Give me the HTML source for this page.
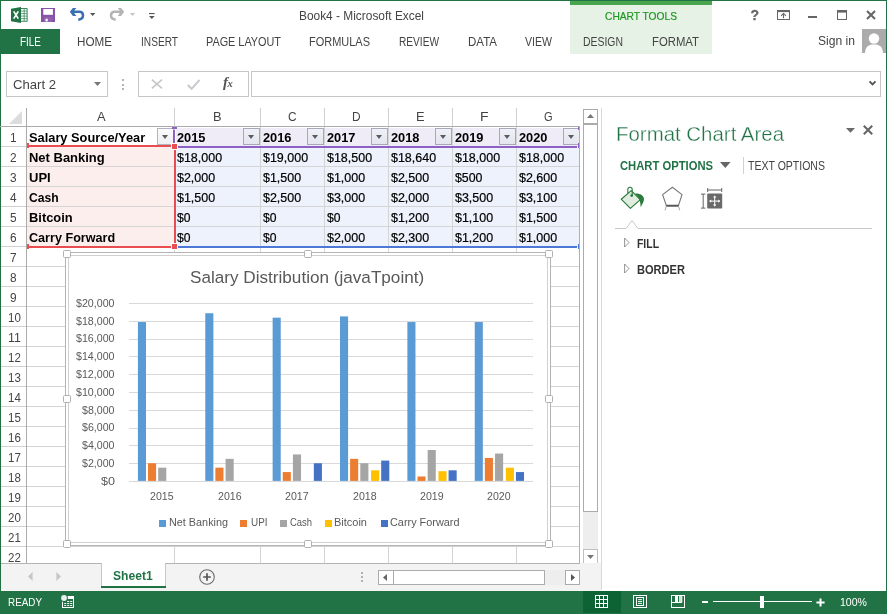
<!DOCTYPE html>
<html><head><meta charset="utf-8"><title>Book4 - Microsoft Excel</title>
<style>
html,body{margin:0;padding:0;background:#fff;}
body{width:887px;height:614px;overflow:hidden;font-family:"Liberation Sans",sans-serif;}
#app{will-change:transform;position:relative;width:887px;height:614px;overflow:hidden;background:#fff;}
.a{position:absolute;}
.t{position:absolute;white-space:nowrap;line-height:20px;height:20px;transform-origin:0 50%;font-family:"Liberation Sans",sans-serif;}
svg{position:absolute;overflow:visible;}
.hl{position:absolute;height:1px;background:#d4d4d4;}
.vl{position:absolute;width:1px;background:#d4d4d4;}
.fb{position:absolute;width:17px;height:17px;border:1px solid #a6a9b8;background:linear-gradient(#f0f0f7,#e4e4ee);box-sizing:border-box;}
.fb:after{content:"";position:absolute;left:3.7px;top:6px;border-left:3.7px solid transparent;border-right:3.7px solid transparent;border-top:4.2px solid #5a5a60;}
.hd{position:absolute;width:6px;height:6px;border:1px solid #b0b0b0;border-radius:1.5px;background:#fff;}

</style></head>
<body>
<div id="app">
<div class="a" style="left:570px;top:0px;width:142px;height:54px;background:#e6f2e6;"></div>
<div class="a" style="left:570px;top:0px;width:142px;height:5px;background:#4aa550;"></div>
<div class="a" style="left:0px;top:0px;width:887px;height:1px;background:#217346;"></div>
<div class="a" style="left:0px;top:0px;width:1px;height:614px;background:#217346;"></div>
<div class="a" style="left:886px;top:0px;width:1px;height:614px;background:#217346;"></div>
<div class="a" style="left:1px;top:29px;width:59px;height:25px;background:#217346;"></div>
<div class="a" style="left:862px;top:29px;width:24px;height:24px;background:#ababab;"></div>
<svg style="left:862px;top:29px" width="24" height="25" viewBox="0 0 24 25"><circle cx="12" cy="9.5" r="5.2" fill="#fff"/><path d="M3 25 C3 17 7 15.5 12 15.5 C17 15.5 21 17 21 25 Z" fill="#fff"/></svg>
<svg style="left:11px;top:7px" width="17" height="16" viewBox="0 0 17 16"><rect x="8.5" y="1.6" width="7.6" height="12.6" fill="#fff" stroke="#217346" stroke-width="0.9"/><path d="M10 4.1H16M10 6.6H16M10 9.1H16M10 11.6H16" stroke="#3d8a5e" stroke-width="0.8"/><path d="M13.2 2V14" stroke="#3d8a5e" stroke-width="0.8"/><path d="M0 1.7 L10 0 V16 L0 14.3 Z" fill="#217346"/><path d="M2.7 4.4 L7.3 11.6 M7.3 4.4 L2.7 11.6" stroke="#fff" stroke-width="1.7"/></svg>
<svg style="left:41px;top:8px" width="14" height="14" viewBox="0 0 14 14"><rect x="0" y="0" width="14" height="14" fill="#8653a6"/><rect x="2.3" y="1" width="9.6" height="5.8" fill="#fff"/><rect x="2.8" y="8.8" width="8.6" height="5.2" fill="#9061ae"/><rect x="4.5" y="10.8" width="2.2" height="2.6" fill="#fff"/></svg>
<svg style="left:69px;top:7px" width="17" height="15" viewBox="0 0 17 15"><path d="M4 4.8 H10.3 C13.2 4.8 14 6.9 14 8.5 C14 10.9 12.1 12.3 9.3 12.7" fill="none" stroke="#3a70b2" stroke-width="2.5"/><path d="M0.8 4.8 L3.9 0.9 H7.3 L4.4 4.8 L7.3 8.9 H3.9 Z" fill="#3a70b2"/></svg>
<svg style="left:90px;top:13px" width="6" height="4"><path d="M0 0 H5.4 L2.7 3 Z" fill="#555"/></svg>
<svg style="left:108.5px;top:7px" width="17" height="15" viewBox="0 0 17 15"><g transform="translate(16,0) scale(-1,1)"><path d="M4 4.8 H10.3 C13.2 4.8 14 6.9 14 8.5 C14 10.9 12.1 12.3 9.3 12.7" fill="none" stroke="#b4b4b4" stroke-width="2.5"/><path d="M0.8 4.8 L3.9 0.9 H7.3 L4.4 4.8 L7.3 8.9 H3.9 Z" fill="#b4b4b4"/></g></svg>
<svg style="left:130px;top:13px" width="6" height="4"><path d="M0 0 H5 L2.5 3 Z" fill="#c4c4c4"/></svg>
<svg style="left:149px;top:12px" width="6" height="8"><rect x="0" y="1" width="5.6" height="1.1" fill="#555"/><path d="M0 4 H5.6 L2.8 7 Z" fill="#555"/></svg>
<span class="a" style="left:750.5px;top:5px;-webkit-text-stroke:0.3px #666;font:700 14px 'Liberation Sans',sans-serif;color:#666;line-height:20px;">?</span>
<svg style="left:777px;top:10px" width="13" height="10" viewBox="0 0 13 10"><rect x="0.5" y="0.5" width="12" height="9" fill="none" stroke="#666" stroke-width="1"/><rect x="0.5" y="0.5" width="12" height="1.6" fill="#666"/><path d="M6.5 8.2 V4 M4 5.8 L6.5 3.4 L9 5.8" fill="none" stroke="#666" stroke-width="1.1"/></svg>
<div class="a" style="left:808px;top:16px;width:9px;height:2px;background:#666"></div>
<svg style="left:837px;top:10px" width="10" height="10" viewBox="0 0 10 10"><rect x="0.5" y="0.5" width="9" height="9" fill="none" stroke="#666" stroke-width="1"/><rect x="0" y="0" width="10" height="2.6" fill="#666"/></svg>
<svg style="left:866px;top:10px" width="10" height="10" viewBox="0 0 10 10"><path d="M1 1 L9 9 M9 1 L1 9" stroke="#666" stroke-width="2.1"/></svg>
<div class="a" style="left:6px;top:71px;width:102px;height:26px;box-sizing:border-box;border:1px solid #c6c6c6;background:#fff;"></div>
<svg style="left:94px;top:82px" width="8" height="5"><path d="M0 0 H7 L3.5 4 Z" fill="#777"/></svg>
<div class="a" style="left:122px;top:79px;width:2px;height:2px;background:#b4b4b4;"></div>
<div class="a" style="left:122px;top:83.5px;width:2px;height:2px;background:#b4b4b4;"></div>
<div class="a" style="left:122px;top:88px;width:2px;height:2px;background:#b4b4b4;"></div>
<div class="a" style="left:138px;top:71px;width:111px;height:26px;box-sizing:border-box;border:1px solid #c6c6c6;background:#fff;"></div>
<div class="a" style="left:251px;top:71px;width:630px;height:26px;box-sizing:border-box;border:1px solid #c6c6c6;background:#fff;"></div>
<svg style="left:151px;top:79px" width="12" height="10"><path d="M0.8 0.6 L11 9.4 M11 0.6 L0.8 9.4" stroke="#c4c4c8" stroke-width="1.4" fill="none"/></svg>
<svg style="left:187px;top:79px" width="14" height="11"><path d="M0.8 6 L4.6 9.8 L12.6 0.8" stroke="#c8c8ce" stroke-width="2" fill="none"/></svg>
<span class="a" style="left:223px;top:72.3px;font:italic 700 15px 'Liberation Serif',serif;color:#555;line-height:20px;letter-spacing:-0.5px">f<span style="font-size:10.5px;">x</span></span>
<svg style="left:869px;top:80px" width="7" height="6"><path d="M0.5 1.4 L3.5 4.4 L6.5 1.4" stroke="#555" stroke-width="1.9" fill="none"/></svg>
<div class="a" style="left:27px;top:147px;width:147px;height:100px;background:#fdeeee;"></div>
<div class="a" style="left:176px;top:128px;width:403px;height:19px;background:#f0ecf7;"></div>
<div class="a" style="left:176px;top:148px;width:403px;height:98px;background:#eef2fc;"></div>
<svg style="left:9px;top:111px" width="14" height="14"><path d="M13 0 V13 H0 Z" fill="#dcdcdc"/></svg>
<div class="a" style="left:174px;top:108px;width:1px;height:19px;background:#d0d0d0;"></div>
<div class="a" style="left:260px;top:108px;width:1px;height:19px;background:#d0d0d0;"></div>
<div class="a" style="left:324px;top:108px;width:1px;height:19px;background:#d0d0d0;"></div>
<div class="a" style="left:388px;top:108px;width:1px;height:19px;background:#d0d0d0;"></div>
<div class="a" style="left:452px;top:108px;width:1px;height:19px;background:#d0d0d0;"></div>
<div class="a" style="left:516px;top:108px;width:1px;height:19px;background:#d0d0d0;"></div>
<div class="a" style="left:0px;top:126px;width:580px;height:1px;background:#ababab;"></div>
<div class="a" style="left:26px;top:108px;width:1px;height:455px;background:#ababab;"></div>
<div class="a" style="left:1px;top:146px;width:25px;height:1px;background:#d0d0d0;"></div>
<div class="a" style="left:27px;top:146px;width:552px;height:1px;background:#d4d4d4;"></div>
<div class="a" style="left:1px;top:166px;width:25px;height:1px;background:#d0d0d0;"></div>
<div class="a" style="left:27px;top:166px;width:552px;height:1px;background:#d4d4d4;"></div>
<div class="a" style="left:1px;top:186px;width:25px;height:1px;background:#d0d0d0;"></div>
<div class="a" style="left:27px;top:186px;width:552px;height:1px;background:#d4d4d4;"></div>
<div class="a" style="left:1px;top:206px;width:25px;height:1px;background:#d0d0d0;"></div>
<div class="a" style="left:27px;top:206px;width:552px;height:1px;background:#d4d4d4;"></div>
<div class="a" style="left:1px;top:226px;width:25px;height:1px;background:#d0d0d0;"></div>
<div class="a" style="left:27px;top:226px;width:552px;height:1px;background:#d4d4d4;"></div>
<div class="a" style="left:1px;top:246px;width:25px;height:1px;background:#d0d0d0;"></div>
<div class="a" style="left:27px;top:246px;width:552px;height:1px;background:#d4d4d4;"></div>
<div class="a" style="left:1px;top:266px;width:25px;height:1px;background:#d0d0d0;"></div>
<div class="a" style="left:27px;top:266px;width:552px;height:1px;background:#d4d4d4;"></div>
<div class="a" style="left:1px;top:286px;width:25px;height:1px;background:#d0d0d0;"></div>
<div class="a" style="left:27px;top:286px;width:552px;height:1px;background:#d4d4d4;"></div>
<div class="a" style="left:1px;top:306px;width:25px;height:1px;background:#d0d0d0;"></div>
<div class="a" style="left:27px;top:306px;width:552px;height:1px;background:#d4d4d4;"></div>
<div class="a" style="left:1px;top:326px;width:25px;height:1px;background:#d0d0d0;"></div>
<div class="a" style="left:27px;top:326px;width:552px;height:1px;background:#d4d4d4;"></div>
<div class="a" style="left:1px;top:346px;width:25px;height:1px;background:#d0d0d0;"></div>
<div class="a" style="left:27px;top:346px;width:552px;height:1px;background:#d4d4d4;"></div>
<div class="a" style="left:1px;top:366px;width:25px;height:1px;background:#d0d0d0;"></div>
<div class="a" style="left:27px;top:366px;width:552px;height:1px;background:#d4d4d4;"></div>
<div class="a" style="left:1px;top:386px;width:25px;height:1px;background:#d0d0d0;"></div>
<div class="a" style="left:27px;top:386px;width:552px;height:1px;background:#d4d4d4;"></div>
<div class="a" style="left:1px;top:406px;width:25px;height:1px;background:#d0d0d0;"></div>
<div class="a" style="left:27px;top:406px;width:552px;height:1px;background:#d4d4d4;"></div>
<div class="a" style="left:1px;top:426px;width:25px;height:1px;background:#d0d0d0;"></div>
<div class="a" style="left:27px;top:426px;width:552px;height:1px;background:#d4d4d4;"></div>
<div class="a" style="left:1px;top:446px;width:25px;height:1px;background:#d0d0d0;"></div>
<div class="a" style="left:27px;top:446px;width:552px;height:1px;background:#d4d4d4;"></div>
<div class="a" style="left:1px;top:466px;width:25px;height:1px;background:#d0d0d0;"></div>
<div class="a" style="left:27px;top:466px;width:552px;height:1px;background:#d4d4d4;"></div>
<div class="a" style="left:1px;top:486px;width:25px;height:1px;background:#d0d0d0;"></div>
<div class="a" style="left:27px;top:486px;width:552px;height:1px;background:#d4d4d4;"></div>
<div class="a" style="left:1px;top:506px;width:25px;height:1px;background:#d0d0d0;"></div>
<div class="a" style="left:27px;top:506px;width:552px;height:1px;background:#d4d4d4;"></div>
<div class="a" style="left:1px;top:526px;width:25px;height:1px;background:#d0d0d0;"></div>
<div class="a" style="left:27px;top:526px;width:552px;height:1px;background:#d4d4d4;"></div>
<div class="a" style="left:1px;top:546px;width:25px;height:1px;background:#d0d0d0;"></div>
<div class="a" style="left:27px;top:546px;width:552px;height:1px;background:#d4d4d4;"></div>
<div class="a" style="left:174px;top:127px;width:1px;height:436px;background:#d4d4d4;"></div>
<div class="a" style="left:260px;top:127px;width:1px;height:436px;background:#d4d4d4;"></div>
<div class="a" style="left:324px;top:127px;width:1px;height:436px;background:#d4d4d4;"></div>
<div class="a" style="left:388px;top:127px;width:1px;height:436px;background:#d4d4d4;"></div>
<div class="a" style="left:452px;top:127px;width:1px;height:436px;background:#d4d4d4;"></div>
<div class="a" style="left:516px;top:127px;width:1px;height:436px;background:#d4d4d4;"></div>
<div class="fb" style="left:157px;top:128px;background:linear-gradient(#fbfbfd,#efeff3);border-color:#b0b4bc"></div>
<div class="fb" style="left:243px;top:128px"></div>
<div class="fb" style="left:307px;top:128px"></div>
<div class="fb" style="left:371px;top:128px"></div>
<div class="fb" style="left:435px;top:128px"></div>
<div class="fb" style="left:499px;top:128px"></div>
<div class="fb" style="left:563px;top:128px"></div>
<div class="a" style="left:27px;top:145px;width:144px;height:2px;background:#ea4d50;"></div>
<div class="a" style="left:27px;top:246px;width:144px;height:2px;background:#ea4d50;"></div>
<div class="a" style="left:27px;top:143px;width:2px;height:5px;background:#ea4d50;"></div>
<div class="a" style="left:27px;top:244px;width:2px;height:5px;background:#ea4d50;"></div>
<div class="a" style="left:174px;top:150px;width:2px;height:93px;background:#ea4d50;"></div>
<div class="a" style="left:171px;top:143px;width:7px;height:7px;background:#fff;"></div>
<div class="a" style="left:172px;top:144px;width:5px;height:5px;background:#ea4d50;"></div>
<div class="a" style="left:171px;top:243px;width:7px;height:7px;background:#fff;"></div>
<div class="a" style="left:172px;top:244px;width:5px;height:5px;background:#ea4d50;"></div>
<div class="a" style="left:172px;top:127px;width:5px;height:2px;background:#8e5fc4;"></div>
<div class="a" style="left:173px;top:130px;width:2px;height:13px;background:#8e5fc4;"></div>
<div class="a" style="left:178px;top:146px;width:399px;height:2px;background:#8e5fc4;"></div>
<div class="a" style="left:578px;top:127px;width:1px;height:3px;background:#8e5fc4;"></div>
<div class="a" style="left:578px;top:143px;width:1px;height:5px;background:#8e5fc4;"></div>
<div class="a" style="left:178px;top:246px;width:399px;height:2px;background:#4d78d6;"></div>
<div class="a" style="left:578px;top:244px;width:1px;height:5px;background:#4d78d6;"></div>
<div class="a" style="left:579px;top:127px;width:1px;height:437px;background:#b0b0b0;"></div>
<div class="a" style="left:65px;top:252px;width:486px;height:294px;box-sizing:border-box;border:1px solid #b4b4b4;background:#fff;"></div>
<div class="a" style="left:68px;top:255px;width:480px;height:288px;box-sizing:border-box;border:1px solid #d0d0d0;background:#fff;"></div>
<svg style="left:0;top:0" width="887" height="614" shape-rendering="crispEdges"><line x1="128.5" x2="532.7" y1="303.5" y2="303.5" stroke="#d9d9d9" stroke-width="1"/><line x1="128.5" x2="532.7" y1="321.5" y2="321.5" stroke="#d9d9d9" stroke-width="1"/><line x1="128.5" x2="532.7" y1="339.5" y2="339.5" stroke="#d9d9d9" stroke-width="1"/><line x1="128.5" x2="532.7" y1="356.5" y2="356.5" stroke="#d9d9d9" stroke-width="1"/><line x1="128.5" x2="532.7" y1="374.5" y2="374.5" stroke="#d9d9d9" stroke-width="1"/><line x1="128.5" x2="532.7" y1="392.5" y2="392.5" stroke="#d9d9d9" stroke-width="1"/><line x1="128.5" x2="532.7" y1="410.5" y2="410.5" stroke="#d9d9d9" stroke-width="1"/><line x1="128.5" x2="532.7" y1="428.5" y2="428.5" stroke="#d9d9d9" stroke-width="1"/><line x1="128.5" x2="532.7" y1="445.5" y2="445.5" stroke="#d9d9d9" stroke-width="1"/><line x1="128.5" x2="532.7" y1="463.5" y2="463.5" stroke="#d9d9d9" stroke-width="1"/><rect x="137.90" y="322.05" width="8.10" height="158.85" fill="#5b9bd5" shape-rendering="auto"/><rect x="148.00" y="463.25" width="8.10" height="17.65" fill="#ed7d31" shape-rendering="auto"/><rect x="158.20" y="467.66" width="8.10" height="13.24" fill="#a5a5a5" shape-rendering="auto"/><rect x="205.27" y="313.23" width="8.10" height="167.67" fill="#5b9bd5" shape-rendering="auto"/><rect x="215.37" y="467.66" width="8.10" height="13.24" fill="#ed7d31" shape-rendering="auto"/><rect x="225.57" y="458.84" width="8.10" height="22.06" fill="#a5a5a5" shape-rendering="auto"/><rect x="272.63" y="317.64" width="8.10" height="163.26" fill="#5b9bd5" shape-rendering="auto"/><rect x="282.73" y="472.07" width="8.10" height="8.82" fill="#ed7d31" shape-rendering="auto"/><rect x="292.93" y="454.42" width="8.10" height="26.47" fill="#a5a5a5" shape-rendering="auto"/><rect x="313.83" y="463.25" width="8.10" height="17.65" fill="#4472c4" shape-rendering="auto"/><rect x="340.00" y="316.40" width="8.10" height="164.50" fill="#5b9bd5" shape-rendering="auto"/><rect x="350.10" y="458.84" width="8.10" height="22.06" fill="#ed7d31" shape-rendering="auto"/><rect x="360.30" y="463.25" width="8.10" height="17.65" fill="#a5a5a5" shape-rendering="auto"/><rect x="371.10" y="470.31" width="8.10" height="10.59" fill="#ffc000" shape-rendering="auto"/><rect x="381.20" y="460.60" width="8.10" height="20.30" fill="#4472c4" shape-rendering="auto"/><rect x="407.37" y="322.05" width="8.10" height="158.85" fill="#5b9bd5" shape-rendering="auto"/><rect x="417.47" y="476.49" width="8.10" height="4.41" fill="#ed7d31" shape-rendering="auto"/><rect x="427.67" y="450.01" width="8.10" height="30.89" fill="#a5a5a5" shape-rendering="auto"/><rect x="438.47" y="471.19" width="8.10" height="9.71" fill="#ffc000" shape-rendering="auto"/><rect x="448.57" y="470.31" width="8.10" height="10.59" fill="#4472c4" shape-rendering="auto"/><rect x="474.73" y="322.05" width="8.10" height="158.85" fill="#5b9bd5" shape-rendering="auto"/><rect x="484.83" y="457.95" width="8.10" height="22.95" fill="#ed7d31" shape-rendering="auto"/><rect x="495.03" y="453.54" width="8.10" height="27.36" fill="#a5a5a5" shape-rendering="auto"/><rect x="505.83" y="467.66" width="8.10" height="13.24" fill="#ffc000" shape-rendering="auto"/><rect x="515.93" y="472.07" width="8.10" height="8.82" fill="#4472c4" shape-rendering="auto"/><line x1="128.5" x2="532.7" y1="481.5" y2="481.5" stroke="#d9d9d9" stroke-width="1"/></svg>
<div class="a" style="left:159px;top:520px;width:7px;height:7px;background:#5b9bd5;"></div>
<div class="a" style="left:240px;top:520px;width:7px;height:7px;background:#ed7d31;"></div>
<div class="a" style="left:280px;top:520px;width:7px;height:7px;background:#a5a5a5;"></div>
<div class="a" style="left:324.5px;top:520px;width:7px;height:7px;background:#ffc000;"></div>
<div class="a" style="left:381px;top:520px;width:7px;height:7px;background:#4472c4;"></div>
<div class="hd" style="left:63px;top:250px"></div>
<div class="hd" style="left:304px;top:250px"></div>
<div class="hd" style="left:545px;top:250px"></div>
<div class="hd" style="left:63px;top:395px"></div>
<div class="hd" style="left:545px;top:395px"></div>
<div class="hd" style="left:63px;top:540px"></div>
<div class="hd" style="left:304px;top:540px"></div>
<div class="hd" style="left:545px;top:540px"></div>
<div class="a" style="left:583px;top:109px;width:15px;height:15px;box-sizing:border-box;border:1px solid #ababab;background:#fff;"></div>
<svg style="left:587px;top:114px" width="7" height="4"><path d="M0 4 H7 L3.5 0 Z" fill="#777"/></svg>
<div class="a" style="left:583px;top:124px;width:15px;height:388px;box-sizing:border-box;border:1px solid #ababab;background:#fff;"></div>
<div class="a" style="left:583px;top:512px;width:15px;height:37px;background:#eeeeee;"></div>
<div class="a" style="left:583px;top:549px;width:15px;height:15px;box-sizing:border-box;border:1px solid #c0c0c0;background:#fff;"></div>
<svg style="left:587px;top:555px" width="7" height="4"><path d="M0 0 H7 L3.5 4 Z" fill="#777"/></svg>
<div class="a" style="left:601px;top:108px;width:1px;height:482px;background:#d8d8d8;"></div>
<div class="a" style="left:1px;top:563px;width:600px;height:28px;background:#f3f3f3;"></div>
<div class="a" style="left:1px;top:563px;width:579px;height:1px;background:#b4b4b4;"></div>
<div class="a" style="left:101px;top:563px;width:65px;height:23px;background:#fff;"></div>
<div class="a" style="left:101px;top:563px;width:1px;height:24px;background:#c6c6c6;"></div>
<div class="a" style="left:165px;top:563px;width:1px;height:24px;background:#c6c6c6;"></div>
<div class="a" style="left:101px;top:586px;width:65px;height:2px;background:#217346;"></div>
<svg style="left:28px;top:572px" width="5" height="9"><path d="M4.6 0 V9 L0 4.5 Z" fill="#c6c6c6"/></svg>
<svg style="left:56px;top:572px" width="5" height="9"><path d="M0.4 0 V9 L5 4.5 Z" fill="#c6c6c6"/></svg>
<svg style="left:199px;top:569px" width="16" height="16"><circle cx="8" cy="8" r="7.3" fill="none" stroke="#6a6a6a" stroke-width="1.1"/><path d="M4.2 8 H11.8 M8 4.2 V11.8" stroke="#555" stroke-width="1.7"/></svg>
<div class="a" style="left:361px;top:572px;width:2px;height:2px;background:#b0b0b0;"></div>
<div class="a" style="left:361px;top:576px;width:2px;height:2px;background:#b0b0b0;"></div>
<div class="a" style="left:361px;top:580px;width:2px;height:2px;background:#b0b0b0;"></div>
<div class="a" style="left:378px;top:570px;width:16px;height:15px;box-sizing:border-box;border:1px solid #ababab;background:#fff;"></div>
<svg style="left:383px;top:574px" width="4" height="7"><path d="M4 0 V7 L0 3.5 Z" fill="#666"/></svg>
<div class="a" style="left:393px;top:570px;width:152px;height:15px;box-sizing:border-box;border:1px solid #ababab;background:#fff;"></div>
<div class="a" style="left:545px;top:570px;width:20px;height:15px;background:#eeeeee;"></div>
<div class="a" style="left:565px;top:570px;width:15px;height:15px;box-sizing:border-box;border:1px solid #ababab;background:#fff;"></div>
<svg style="left:571px;top:574px" width="4" height="7"><path d="M0 0 V7 L4 3.5 Z" fill="#555"/></svg>
<div class="a" style="left:0px;top:591px;width:887px;height:23px;background:#217346;"></div>
<svg style="left:61px;top:595px" width="14" height="14" viewBox="0 0 14 14"><rect x="1.5" y="1.5" width="11" height="11" fill="none" stroke="#fff" stroke-width="1"/><rect x="1.5" y="1.2" width="11" height="2.8" fill="#fff"/><circle cx="3" cy="3" r="3.9" fill="#217346"/><circle cx="3" cy="3" r="2.9" fill="#e9f1ec"/><path d="M6.2 6h2v1h-2zM9.2 6h2v1h-2zM3.2 8h2v1h-2zM6.2 8h2v1h-2zM9.2 8h2v1h-2zM3.2 10h2v1h-2zM6.2 10h2v1h-2zM9.2 10h2v1h-2z" fill="#fff"/></svg>
<div class="a" style="left:583px;top:591px;width:38px;height:22px;background:#0e6334"></div>
<svg style="left:595px;top:595px" width="13" height="13" viewBox="0 0 13 13" shape-rendering="crispEdges"><path d="M0.5 0.5 H12.5 V12.5 H0.5 Z M0.5 4.5 H12.5 M0.5 8.5 H12.5 M4.5 0.5 V12.5 M8.5 0.5 V12.5" fill="none" stroke="#fff" stroke-width="1"/></svg>
<svg style="left:633px;top:595px" width="14" height="13" viewBox="0 0 14 13"><rect x="0.5" y="0.5" width="13" height="12" fill="none" stroke="#fff" stroke-width="1"/><rect x="3.5" y="2.5" width="7" height="8" fill="none" stroke="#fff" stroke-width="1"/><path d="M5 4.6 H9 M5 6.5 H9 M5 8.4 H9" stroke="#fff" stroke-width="0.9"/></svg>
<svg style="left:671px;top:595px" width="14" height="13" viewBox="0 0 14 13"><rect x="0.5" y="0.5" width="13" height="12" fill="none" stroke="#fff" stroke-width="1"/><rect x="4" y="1" width="3" height="6" fill="#fff"/><rect x="8" y="1" width="2.6" height="6" fill="#cfe3d6"/><path d="M1 7.5 H10.8 V1" fill="none" stroke="#fff" stroke-width="1"/></svg>
<div class="a" style="left:702px;top:600.5px;width:6px;height:2.2px;background:#fff"></div>
<div class="a" style="left:712.5px;top:601px;width:99px;height:1px;background:#fff"></div>
<div class="a" style="left:760px;top:595.5px;width:4px;height:12px;background:#fff"></div>
<svg style="left:816px;top:597.5px" width="9" height="9" viewBox="0 0 9 9"><path d="M0.4 4.5 H8.6 M4.5 0.4 V8.6" stroke="#fff" stroke-width="2"/></svg>
<svg style="left:846px;top:128px" width="9" height="5"><path d="M0 0 H9 L4.5 4.8 Z" fill="#6a6a6a"/></svg>
<svg style="left:863px;top:125px" width="10" height="10" viewBox="0 0 10 10"><path d="M0.8 0.8 L9.2 9.2 M9.2 0.8 L0.8 9.2" stroke="#666" stroke-width="2.1"/></svg>
<svg style="left:720px;top:162px" width="11" height="6"><path d="M0 0 H10.6 L5.3 6 Z" fill="#666"/></svg>
<div class="a" style="left:743px;top:157px;width:1px;height:17px;background:#d0d0d0"></div>
<svg style="left:618px;top:185px" width="30" height="26" viewBox="0 0 30 26"><path d="M3.2 14.2 L13.2 5.6 L22.4 14.6 L12.4 23.4 Z" fill="#e1ece1" stroke="#2a7d3c" stroke-width="1.2" stroke-linejoin="round"/><path d="M9.8 8.4 V4.4 C9.8 1.6 14.2 1.6 14.2 4.4 V10.4" fill="none" stroke="#2a7d3c" stroke-width="1.1"/><circle cx="13.7" cy="10.6" r="1.4" fill="#2a7d3c"/><path d="M17.2 8.6 C21.6 8.2 25.8 10.4 26 14 C26 17 24 19.4 22.6 22.2 C22.6 18 22 15.6 20.6 13.2 Z" fill="#2a7d3c"/></svg>
<svg style="left:660px;top:185px" width="25" height="27" viewBox="0 0 25 27"><path d="M12.4 2.2 L22 9.6 L18.4 20.6 H6.4 L2.6 9.6 Z" fill="none" stroke="#777" stroke-width="1.1"/><path d="M6.4 20.7 H18.4" stroke="#555" stroke-width="1.9"/><path d="M6.4 21 L5 25.4 M18.4 21 L19.8 25.4" stroke="#aaa" stroke-width="1"/></svg>
<svg style="left:700px;top:187px" width="24" height="23" viewBox="0 0 24 23"><rect x="7.2" y="6.6" width="15" height="15" rx="0.8" fill="#6a6a6a"/><path d="M7.7 1 V5 M21.7 1 V5 M7.7 3 H21.7" stroke="#666" stroke-width="1" fill="none"/><path d="M1 7.1 H5.4 M1 21.1 H5.4 M3.2 7.1 V21.1" stroke="#666" stroke-width="1" fill="none"/><path d="M14.7 9 V19.2 M9.6 14.1 H19.8" stroke="#fff" stroke-width="1"/><path d="M13 10.6 L14.7 8.6 L16.4 10.6 Z M13 17.6 L14.7 19.6 L16.4 17.6 Z M11.2 12.4 L9.2 14.1 L11.2 15.8 Z M18.2 12.4 L20.2 14.1 L18.2 15.8 Z" fill="#fff"/></svg>
<svg style="left:0;top:0" width="887" height="614"><path d="M615 228.5 H626 L632 220.5 L638 228.5 H872" fill="none" stroke="#c8c8c8" stroke-width="1"/></svg>
<svg style="left:624px;top:237px" width="7" height="11"><path d="M0.6 1 V10 L5 5.5 Z" fill="#fff" stroke="#888" stroke-width="0.9"/></svg>
<svg style="left:624px;top:263px" width="7" height="11"><path d="M0.6 1 V10 L5 5.5 Z" fill="#fff" stroke="#888" stroke-width="0.9"/></svg>
<span class="t" id="t0" style="left:299.00px;top:5.50px;font-size:12.5px;font-weight:400;color:#444;transform:scaleX(0.9520);">Book4 - Microsoft Excel</span>
<span class="t" id="t1" style="left:20.00px;top:31.50px;font-size:12px;font-weight:400;color:#fff;transform:scaleX(0.8286);">FILE</span>
<span class="t" id="t2" style="left:77.00px;top:31.50px;font-size:12px;font-weight:400;color:#444;transform:scaleX(0.9722);">HOME</span>
<span class="t" id="t3" style="left:141.00px;top:31.50px;font-size:12px;font-weight:400;color:#444;transform:scaleX(0.8448);">INSERT</span>
<span class="t" id="t4" style="left:206.00px;top:31.50px;font-size:12px;font-weight:400;color:#444;transform:scaleX(0.9045);">PAGE LAYOUT</span>
<span class="t" id="t5" style="left:309.00px;top:31.50px;font-size:12px;font-weight:400;color:#444;transform:scaleX(0.9147);">FORMULAS</span>
<span class="t" id="t6" style="left:399.00px;top:31.50px;font-size:12px;font-weight:400;color:#444;transform:scaleX(0.8449);">REVIEW</span>
<span class="t" id="t7" style="left:468.00px;top:31.50px;font-size:12px;font-weight:400;color:#444;transform:scaleX(0.9592);">DATA</span>
<span class="t" id="t8" style="left:525.00px;top:31.50px;font-size:12px;font-weight:400;color:#444;transform:scaleX(0.8803);">VIEW</span>
<span class="t" id="t9" style="left:583.00px;top:31.50px;font-size:12px;font-weight:400;color:#444;transform:scaleX(0.8693);">DESIGN</span>
<span class="t" id="t10" style="left:652.00px;top:31.50px;font-size:12px;font-weight:400;color:#444;transform:scaleX(0.9441);">FORMAT</span>
<span class="t" id="t11" style="left:605.00px;top:6.00px;font-size:11.8px;font-weight:400;color:#1c9620;transform:scaleX(0.8670);-webkit-text-stroke:0.2px #1c9620;">CHART TOOLS</span>
<span class="t" id="t12" style="left:818.00px;top:31.00px;font-size:12.5px;font-weight:400;color:#444;transform:scaleX(0.9677);">Sign in</span>
<span class="t" id="t13" style="left:13.00px;top:74.50px;font-size:13px;font-weight:400;color:#444;transform:scaleX(1.0084);">Chart 2</span>
<span class="t" id="t14" style="left:96.70px;top:106.80px;font-size:12.5px;font-weight:400;color:#444;transform:scaleX(1.0307);">A</span>
<span class="t" id="t15" style="left:212.70px;top:106.80px;font-size:12.5px;font-weight:400;color:#444;transform:scaleX(1.0307);">B</span>
<span class="t" id="t16" style="left:287.70px;top:106.80px;font-size:12.5px;font-weight:400;color:#444;transform:scaleX(0.9522);">C</span>
<span class="t" id="t17" style="left:351.70px;top:106.80px;font-size:12.5px;font-weight:400;color:#444;transform:scaleX(0.9522);">D</span>
<span class="t" id="t18" style="left:415.70px;top:106.80px;font-size:12.5px;font-weight:400;color:#444;transform:scaleX(1.0307);">E</span>
<span class="t" id="t19" style="left:479.70px;top:106.80px;font-size:12.5px;font-weight:400;color:#444;transform:scaleX(1.1256);">F</span>
<span class="t" id="t20" style="left:543.70px;top:106.80px;font-size:12.5px;font-weight:400;color:#444;transform:scaleX(0.8835);">G</span>
<span class="t" id="t21" style="left:10.20px;top:127.60px;font-size:12.5px;font-weight:400;color:#444;transform:scaleX(0.9492);">1</span>
<span class="t" id="t22" style="left:10.20px;top:147.60px;font-size:12.5px;font-weight:400;color:#444;transform:scaleX(0.9492);">2</span>
<span class="t" id="t23" style="left:10.20px;top:167.60px;font-size:12.5px;font-weight:400;color:#444;transform:scaleX(0.9492);">3</span>
<span class="t" id="t24" style="left:10.20px;top:187.60px;font-size:12.5px;font-weight:400;color:#444;transform:scaleX(0.9492);">4</span>
<span class="t" id="t25" style="left:10.20px;top:207.60px;font-size:12.5px;font-weight:400;color:#444;transform:scaleX(0.9492);">5</span>
<span class="t" id="t26" style="left:10.20px;top:227.60px;font-size:12.5px;font-weight:400;color:#444;transform:scaleX(0.9492);">6</span>
<span class="t" id="t27" style="left:10.20px;top:247.60px;font-size:12.5px;font-weight:400;color:#444;transform:scaleX(0.9492);">7</span>
<span class="t" id="t28" style="left:10.20px;top:267.60px;font-size:12.5px;font-weight:400;color:#444;transform:scaleX(0.9492);">8</span>
<span class="t" id="t29" style="left:10.20px;top:287.60px;font-size:12.5px;font-weight:400;color:#444;transform:scaleX(0.9492);">9</span>
<span class="t" id="t30" style="left:7.80px;top:307.60px;font-size:12.5px;font-weight:400;color:#444;transform:scaleX(0.9204);">10</span>
<span class="t" id="t31" style="left:7.80px;top:327.60px;font-size:12.5px;font-weight:400;color:#444;transform:scaleX(0.9858);">11</span>
<span class="t" id="t32" style="left:7.80px;top:347.60px;font-size:12.5px;font-weight:400;color:#444;transform:scaleX(0.9204);">12</span>
<span class="t" id="t33" style="left:7.80px;top:367.60px;font-size:12.5px;font-weight:400;color:#444;transform:scaleX(0.9204);">13</span>
<span class="t" id="t34" style="left:7.80px;top:387.60px;font-size:12.5px;font-weight:400;color:#444;transform:scaleX(0.9204);">14</span>
<span class="t" id="t35" style="left:7.80px;top:407.60px;font-size:12.5px;font-weight:400;color:#444;transform:scaleX(0.9204);">15</span>
<span class="t" id="t36" style="left:7.80px;top:427.60px;font-size:12.5px;font-weight:400;color:#444;transform:scaleX(0.9204);">16</span>
<span class="t" id="t37" style="left:7.80px;top:447.60px;font-size:12.5px;font-weight:400;color:#444;transform:scaleX(0.9204);">17</span>
<span class="t" id="t38" style="left:7.80px;top:467.60px;font-size:12.5px;font-weight:400;color:#444;transform:scaleX(0.9204);">18</span>
<span class="t" id="t39" style="left:7.80px;top:487.60px;font-size:12.5px;font-weight:400;color:#444;transform:scaleX(0.9204);">19</span>
<span class="t" id="t40" style="left:7.80px;top:507.60px;font-size:12.5px;font-weight:400;color:#444;transform:scaleX(0.9204);">20</span>
<span class="t" id="t41" style="left:7.80px;top:527.60px;font-size:12.5px;font-weight:400;color:#444;transform:scaleX(0.9204);">21</span>
<span class="t" id="t42" style="left:7.80px;top:547.60px;font-size:12.5px;font-weight:400;color:#444;transform:scaleX(0.9204);">22</span>
<span class="t" id="t43" style="left:28.80px;top:127.90px;font-size:12.2px;font-weight:700;color:#000;transform:scaleX(1.0522);">Salary Source/Year</span>
<span class="t" id="t44" style="left:177.30px;top:127.90px;font-size:12.2px;font-weight:700;color:#000;transform:scaleX(1.0507);">2015</span>
<span class="t" id="t45" style="left:263.30px;top:127.90px;font-size:12.2px;font-weight:700;color:#000;transform:scaleX(1.0507);">2016</span>
<span class="t" id="t46" style="left:327.30px;top:127.90px;font-size:12.2px;font-weight:700;color:#000;transform:scaleX(1.0507);">2017</span>
<span class="t" id="t47" style="left:391.30px;top:127.90px;font-size:12.2px;font-weight:700;color:#000;transform:scaleX(1.0507);">2018</span>
<span class="t" id="t48" style="left:455.30px;top:127.90px;font-size:12.2px;font-weight:700;color:#000;transform:scaleX(1.0507);">2019</span>
<span class="t" id="t49" style="left:519.30px;top:127.90px;font-size:12.2px;font-weight:700;color:#000;transform:scaleX(1.0507);">2020</span>
<span class="t" id="t50" style="left:28.80px;top:147.90px;font-size:12.2px;font-weight:700;color:#000;transform:scaleX(1.0646);">Net Banking</span>
<span class="t" id="t51" style="left:176.90px;top:147.90px;font-size:12px;font-weight:400;color:#000;transform:scaleX(1.0394);-webkit-text-stroke:0.2px #000;">$18,000</span>
<span class="t" id="t52" style="left:262.90px;top:147.90px;font-size:12px;font-weight:400;color:#000;transform:scaleX(1.0394);-webkit-text-stroke:0.2px #000;">$19,000</span>
<span class="t" id="t53" style="left:326.90px;top:147.90px;font-size:12px;font-weight:400;color:#000;transform:scaleX(1.0394);-webkit-text-stroke:0.2px #000;">$18,500</span>
<span class="t" id="t54" style="left:390.90px;top:147.90px;font-size:12px;font-weight:400;color:#000;transform:scaleX(1.0394);-webkit-text-stroke:0.2px #000;">$18,640</span>
<span class="t" id="t55" style="left:454.90px;top:147.90px;font-size:12px;font-weight:400;color:#000;transform:scaleX(1.0394);-webkit-text-stroke:0.2px #000;">$18,000</span>
<span class="t" id="t56" style="left:518.90px;top:147.90px;font-size:12px;font-weight:400;color:#000;transform:scaleX(1.0394);-webkit-text-stroke:0.2px #000;">$18,000</span>
<span class="t" id="t57" style="left:28.80px;top:167.90px;font-size:12.2px;font-weight:700;color:#000;transform:scaleX(1.0675);">UPI</span>
<span class="t" id="t58" style="left:176.90px;top:167.90px;font-size:12px;font-weight:400;color:#000;transform:scaleX(1.0381);-webkit-text-stroke:0.2px #000;">$2,000</span>
<span class="t" id="t59" style="left:262.90px;top:167.90px;font-size:12px;font-weight:400;color:#000;transform:scaleX(1.0381);-webkit-text-stroke:0.2px #000;">$1,500</span>
<span class="t" id="t60" style="left:326.90px;top:167.90px;font-size:12px;font-weight:400;color:#000;transform:scaleX(1.0381);-webkit-text-stroke:0.2px #000;">$1,000</span>
<span class="t" id="t61" style="left:390.90px;top:167.90px;font-size:12px;font-weight:400;color:#000;transform:scaleX(1.0381);-webkit-text-stroke:0.2px #000;">$2,500</span>
<span class="t" id="t62" style="left:454.90px;top:167.90px;font-size:12px;font-weight:400;color:#000;transform:scaleX(1.0298);-webkit-text-stroke:0.2px #000;">$500</span>
<span class="t" id="t63" style="left:518.90px;top:167.90px;font-size:12px;font-weight:400;color:#000;transform:scaleX(1.0381);-webkit-text-stroke:0.2px #000;">$2,600</span>
<span class="t" id="t64" style="left:28.80px;top:187.90px;font-size:12.2px;font-weight:700;color:#000;transform:scaleX(0.9962);">Cash</span>
<span class="t" id="t65" style="left:176.90px;top:187.90px;font-size:12px;font-weight:400;color:#000;transform:scaleX(1.0381);-webkit-text-stroke:0.2px #000;">$1,500</span>
<span class="t" id="t66" style="left:262.90px;top:187.90px;font-size:12px;font-weight:400;color:#000;transform:scaleX(1.0381);-webkit-text-stroke:0.2px #000;">$2,500</span>
<span class="t" id="t67" style="left:326.90px;top:187.90px;font-size:12px;font-weight:400;color:#000;transform:scaleX(1.0381);-webkit-text-stroke:0.2px #000;">$3,000</span>
<span class="t" id="t68" style="left:390.90px;top:187.90px;font-size:12px;font-weight:400;color:#000;transform:scaleX(1.0381);-webkit-text-stroke:0.2px #000;">$2,000</span>
<span class="t" id="t69" style="left:454.90px;top:187.90px;font-size:12px;font-weight:400;color:#000;transform:scaleX(1.0381);-webkit-text-stroke:0.2px #000;">$3,500</span>
<span class="t" id="t70" style="left:518.90px;top:187.90px;font-size:12px;font-weight:400;color:#000;transform:scaleX(1.0381);-webkit-text-stroke:0.2px #000;">$3,100</span>
<span class="t" id="t71" style="left:28.80px;top:207.90px;font-size:12.2px;font-weight:700;color:#000;transform:scaleX(1.0578);">Bitcoin</span>
<span class="t" id="t72" style="left:176.90px;top:207.90px;font-size:12px;font-weight:400;color:#000;transform:scaleX(1.0105);-webkit-text-stroke:0.2px #000;">$0</span>
<span class="t" id="t73" style="left:262.90px;top:207.90px;font-size:12px;font-weight:400;color:#000;transform:scaleX(1.0105);-webkit-text-stroke:0.2px #000;">$0</span>
<span class="t" id="t74" style="left:326.90px;top:207.90px;font-size:12px;font-weight:400;color:#000;transform:scaleX(1.0105);-webkit-text-stroke:0.2px #000;">$0</span>
<span class="t" id="t75" style="left:390.90px;top:207.90px;font-size:12px;font-weight:400;color:#000;transform:scaleX(1.0381);-webkit-text-stroke:0.2px #000;">$1,200</span>
<span class="t" id="t76" style="left:454.90px;top:207.90px;font-size:12px;font-weight:400;color:#000;transform:scaleX(1.0381);-webkit-text-stroke:0.2px #000;">$1,100</span>
<span class="t" id="t77" style="left:518.90px;top:207.90px;font-size:12px;font-weight:400;color:#000;transform:scaleX(1.0381);-webkit-text-stroke:0.2px #000;">$1,500</span>
<span class="t" id="t78" style="left:28.80px;top:227.90px;font-size:12.2px;font-weight:700;color:#000;transform:scaleX(1.0347);">Carry Forward</span>
<span class="t" id="t79" style="left:176.90px;top:227.90px;font-size:12px;font-weight:400;color:#000;transform:scaleX(1.0105);-webkit-text-stroke:0.2px #000;">$0</span>
<span class="t" id="t80" style="left:262.90px;top:227.90px;font-size:12px;font-weight:400;color:#000;transform:scaleX(1.0105);-webkit-text-stroke:0.2px #000;">$0</span>
<span class="t" id="t81" style="left:326.90px;top:227.90px;font-size:12px;font-weight:400;color:#000;transform:scaleX(1.0381);-webkit-text-stroke:0.2px #000;">$2,000</span>
<span class="t" id="t82" style="left:390.90px;top:227.90px;font-size:12px;font-weight:400;color:#000;transform:scaleX(1.0381);-webkit-text-stroke:0.2px #000;">$2,300</span>
<span class="t" id="t83" style="left:454.90px;top:227.90px;font-size:12px;font-weight:400;color:#000;transform:scaleX(1.0381);-webkit-text-stroke:0.2px #000;">$1,200</span>
<span class="t" id="t84" style="left:518.90px;top:227.90px;font-size:12px;font-weight:400;color:#000;transform:scaleX(1.0381);-webkit-text-stroke:0.2px #000;">$1,000</span>
<span class="t" id="t85" style="left:189.80px;top:267.20px;font-size:16.3px;font-weight:400;color:#595959;transform:scaleX(1.0521);">Salary Distribution (javaTpoint)</span>
<span class="t" id="t86" style="left:76.00px;top:292.90px;font-size:11px;font-weight:400;color:#595959;transform:scaleX(0.9682);">$20,000</span>
<span class="t" id="t87" style="left:76.00px;top:310.69px;font-size:11px;font-weight:400;color:#595959;transform:scaleX(0.9682);">$18,000</span>
<span class="t" id="t88" style="left:76.00px;top:328.48px;font-size:11px;font-weight:400;color:#595959;transform:scaleX(0.9682);">$16,000</span>
<span class="t" id="t89" style="left:76.00px;top:346.27px;font-size:11px;font-weight:400;color:#595959;transform:scaleX(0.9682);">$14,000</span>
<span class="t" id="t90" style="left:76.00px;top:364.06px;font-size:11px;font-weight:400;color:#595959;transform:scaleX(0.9682);">$12,000</span>
<span class="t" id="t91" style="left:76.00px;top:381.85px;font-size:11px;font-weight:400;color:#595959;transform:scaleX(0.9682);">$10,000</span>
<span class="t" id="t92" style="left:82.00px;top:399.64px;font-size:11px;font-weight:400;color:#595959;transform:scaleX(0.9656);">$8,000</span>
<span class="t" id="t93" style="left:82.00px;top:417.43px;font-size:11px;font-weight:400;color:#595959;transform:scaleX(0.9656);">$6,000</span>
<span class="t" id="t94" style="left:82.00px;top:435.22px;font-size:11px;font-weight:400;color:#595959;transform:scaleX(0.9656);">$4,000</span>
<span class="t" id="t95" style="left:82.00px;top:453.01px;font-size:11px;font-weight:400;color:#595959;transform:scaleX(0.9656);">$2,000</span>
<span class="t" id="t96" style="left:100.50px;top:470.80px;font-size:11px;font-weight:400;color:#595959;transform:scaleX(1.1429);">$0</span>
<span class="t" id="t97" style="left:150.38px;top:486.00px;font-size:11px;font-weight:400;color:#595959;transform:scaleX(0.9639);">2015</span>
<span class="t" id="t98" style="left:217.75px;top:486.00px;font-size:11px;font-weight:400;color:#595959;transform:scaleX(0.9639);">2016</span>
<span class="t" id="t99" style="left:285.12px;top:486.00px;font-size:11px;font-weight:400;color:#595959;transform:scaleX(0.9639);">2017</span>
<span class="t" id="t100" style="left:352.50px;top:486.00px;font-size:11px;font-weight:400;color:#595959;transform:scaleX(0.9639);">2018</span>
<span class="t" id="t101" style="left:419.87px;top:486.00px;font-size:11px;font-weight:400;color:#595959;transform:scaleX(0.9639);">2019</span>
<span class="t" id="t102" style="left:487.24px;top:486.00px;font-size:11px;font-weight:400;color:#595959;transform:scaleX(0.9639);">2020</span>
<span class="t" id="t103" style="left:169.00px;top:511.50px;font-size:11px;font-weight:400;color:#595959;transform:scaleX(0.9844);">Net Banking</span>
<span class="t" id="t104" style="left:250.50px;top:511.50px;font-size:11px;font-weight:400;color:#595959;transform:scaleX(0.8995);">UPI</span>
<span class="t" id="t105" style="left:290.00px;top:511.50px;font-size:11px;font-weight:400;color:#595959;transform:scaleX(0.8564);">Cash</span>
<span class="t" id="t106" style="left:334.00px;top:511.50px;font-size:11px;font-weight:400;color:#595959;transform:scaleX(0.9991);">Bitcoin</span>
<span class="t" id="t107" style="left:390.00px;top:511.50px;font-size:11px;font-weight:400;color:#595959;transform:scaleX(0.9887);">Carry Forward</span>
<span class="t" id="t108" style="left:113.30px;top:566.00px;font-size:13.5px;font-weight:700;color:#217346;transform:scaleX(0.8965);">Sheet1</span>
<span class="t" id="t109" style="left:8.00px;top:592.00px;font-size:11.5px;font-weight:400;color:#fff;transform:scaleX(0.8580);">READY</span>
<span class="t" id="t110" style="left:840.00px;top:592.00px;font-size:11.5px;font-weight:400;color:#fff;transform:scaleX(0.9177);">100%</span>
<span class="t" id="t111" style="left:616.00px;top:124.00px;font-size:20.5px;font-weight:400;color:#217346;transform:scaleX(0.9963);-webkit-text-stroke:0.35px #fff;">Format Chart Area</span>
<span class="t" id="t112" style="left:620.00px;top:155.50px;font-size:12px;font-weight:700;color:#217346;transform:scaleX(0.9361);">CHART OPTIONS</span>
<span class="t" id="t113" style="left:748.00px;top:155.50px;font-size:12px;font-weight:400;color:#444;transform:scaleX(0.8770);">TEXT OPTIONS</span>
<span class="t" id="t114" style="left:637.00px;top:233.50px;font-size:12px;font-weight:700;color:#333;transform:scaleX(0.8686);">FILL</span>
<span class="t" id="t115" style="left:637.00px;top:259.50px;font-size:12px;font-weight:700;color:#333;transform:scaleX(0.9228);">BORDER</span>
</div>
</body></html>
